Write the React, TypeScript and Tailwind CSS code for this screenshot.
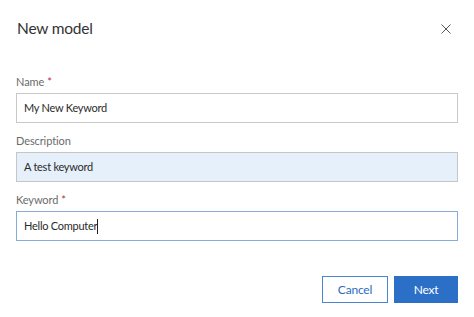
import React from 'react';

const font = { fontFamily: 'Lato, "Open Sans", sans-serif' };

const Field: React.FC<{ label: string; value: string; required?: boolean; variant?: 'plain' | 'filled' | 'focus' }> = ({
  label,
  value,
  required,
  variant = 'plain',
}) => {
  const box =
    variant === 'filled'
      ? 'bg-[#e5f0fb] border-[#c6c6c6]'
      : variant === 'focus'
        ? 'bg-white border-[#86aadb]'
        : 'bg-white border-[#c8c8c8]';
  return (
    <div className="flex flex-col">
      <label className="text-[11px] leading-[18px] tracking-[-0.1px] text-[#6b6b6b]">
        {label}
        {required && <span className="text-[#b7323a] ml-[3px]">*</span>}
      </label>
      <div className={`mt-[2px] h-[30px] border px-[7px] flex items-center text-[11px] tracking-[-0.25px] text-[#2b2b2b] ${box}`}>
        <span>{value}</span>
        {variant === 'focus' && <span className="w-px h-[15px] bg-[#222]" />}
      </div>
    </div>
  );
};

export default function App() {
  return (
    <div className="w-[474px] h-[317px] bg-white px-4 flex flex-col" style={font}>
      <div className="h-[58px] flex items-center justify-between pl-px">
        <h2 className="text-[15.5px] tracking-[-0.2px] text-[#333] font-normal">New model</h2>
        <button className="w-[20px] h-[20px] flex items-center justify-center mr-[2px]">
          <svg width="10" height="10" viewBox="0 0 10 10" fill="none">
            <path d="M0.5 0.5L9.5 9.5M9.5 0.5L0.5 9.5" stroke="#555" strokeWidth="1" />
          </svg>
        </button>
      </div>
      <div className="mt-[15px] flex flex-col gap-[9px]">
        <Field label="Name" value="My New Keyword" required />
        <Field label="Description" value="A test keyword" variant="filled" />
        <Field label="Keyword" value="Hello Computer" required variant="focus" />
      </div>
      <div className="mt-[35px] flex justify-end gap-[6px]">
        <button className="w-[66px] h-[27px] border border-[#4a85d0] text-[#2c6cbf] text-[12px] tracking-[-0.2px] bg-white">Cancel</button>
        <button className="w-[64px] h-[27px] bg-[#2b6fc6] text-white text-[12px] tracking-[-0.2px]">Next</button>
      </div>
    </div>
  );
}
